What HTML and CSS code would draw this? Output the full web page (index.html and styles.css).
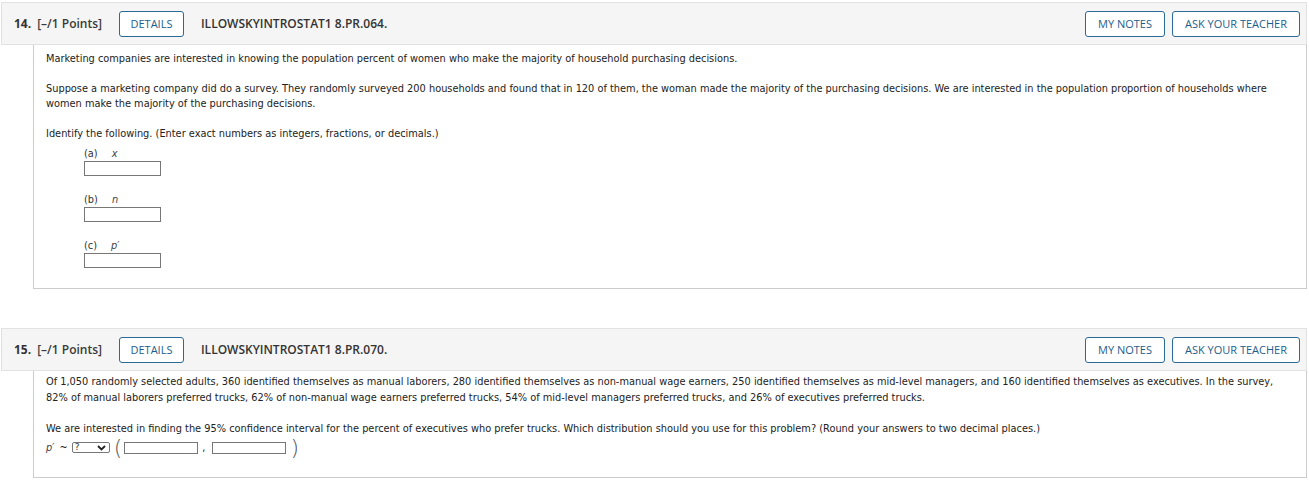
FILE: index.html
```html
<!DOCTYPE html>
<html>
<head>
<meta charset="utf-8">
<link rel="stylesheet" href="styles.css">
</head>
<body>
<div class="question">
  <div class="qhead">
    <span class="qnum">14.</span>
    <span class="points">[–/1 Points]</span>
    <button class="btn details">DETAILS</button>
    <span class="qid">ILLOWSKYINTROSTAT1 8.PR.064.</span>
    <div class="spacer"></div>
    <button class="btn">MY NOTES</button>
    <button class="btn ask">ASK YOUR TEACHER</button>
  </div>
  <div class="qbody first">
    <p>Marketing companies are interested in knowing the population percent of women who make the majority of household purchasing decisions.</p>
    <p>Suppose a marketing company did do a survey. They randomly surveyed 200 households and found that in 120 of them, the woman made the majority of the purchasing decisions. We are interested in the population proportion of households where women make the majority of the purchasing decisions.</p>
    <p class="lead">Identify the following. (Enter exact numbers as integers, fractions, or decimals.)</p>
    <div class="parts">
      <div class="part">
        <div class="plabel">(a)<i class="var">x</i></div>
        <div class="box"></div>
      </div>
      <div class="part">
        <div class="plabel">(b)<i class="var">n</i></div>
        <div class="box"></div>
      </div>
      <div class="part">
        <div class="plabel">(c)<i class="var">p′</i></div>
        <div class="box"></div>
      </div>
    </div>
  </div>
</div>

<div class="question second">
  <div class="qhead">
    <span class="qnum">15.</span>
    <span class="points">[–/1 Points]</span>
    <button class="btn details">DETAILS</button>
    <span class="qid">ILLOWSKYINTROSTAT1 8.PR.070.</span>
    <div class="spacer"></div>
    <button class="btn">MY NOTES</button>
    <button class="btn ask">ASK YOUR TEACHER</button>
  </div>
  <div class="qbody tight">
    <p>Of 1,050 randomly selected adults, 360 identified themselves as manual laborers, 280 identified themselves as non-manual wage earners, 250 identified themselves as mid-level managers, and 160 identified themselves as executives. In the survey, 82% of manual laborers preferred trucks, 62% of non-manual wage earners preferred trucks, 54% of mid-level managers preferred trucks, and 26% of executives preferred trucks.</p>
    <p class="nomargin">We are interested in finding the 95% confidence interval for the percent of executives who prefer trucks. Which distribution should you use for this problem? (Round your answers to two decimal places.)</p>
    <div class="dist">
      <i class="var pv">p′</i><span class="tilde">~</span>
      <span class="select">?<svg class="chev" width="9" height="6" viewBox="0 0 9 6"><path d="M1 1 L4.5 4.5 L8 1" fill="none" stroke="#222" stroke-width="1.8"/></svg></span>
      <span class="paren">(</span>
      <span class="box wide"></span>
      <span class="comma">,</span>
      <span class="box wide"></span>
      <span class="paren">)</span>
    </div>
  </div>
</div>
</body>
</html>
```
FILE: styles.css
```css
* { box-sizing: border-box; }
body {
  margin: 0;
  padding: 2px 2px 0 1px;
  background: #fff;
  font-family: "DejaVu Sans", Verdana, sans-serif;
  color: #333;
}
.question.second { margin-top: 39px; }
.qhead {
  display: flex;
  align-items: center;
  height: 43px;
  background: #f5f5f5;
  border: 1px solid #e2e2e2;
  padding: 0 6px 0 12px;
  font-family: "Open Sans", sans-serif;
  font-size: 12px;
}
.qnum { font-weight: 700; color: #333; }
.points { font-weight: 600; color: #3a3a3a; margin-left: 6px; }
.qid { font-weight: 600; color: #333; margin-left: 17px; }
.spacer { flex: 1; }
.btn {
  font-family: "Open Sans", sans-serif;
  font-size: 11px;
  color: #1d5d8c;
  background: #fff;
  border: 1px solid #2b6a96;
  border-radius: 3px;
  height: 26px;
  padding: 0 12px;
  margin-left: 17px;
  line-height: 24px;
}
.btn.details { padding: 0 10.5px; }
.btn.ask { margin-left: 7px; }
.qbody {
  margin-left: 32px;
  border: 1px solid #ccc;
  border-top: none;
  padding: 6px 12px 20px 12px;
  font-size: 9.8px;
  line-height: 15px;
  color: #222;
}
.qbody.tight { padding-top: 3px; padding-bottom: 19px; line-height: 16px; }
.qbody p { margin: 0 0 15px 0; }
.qbody p.lead { margin-bottom: 6px; }
.qbody p.nomargin { margin-bottom: 0; }
.parts { padding-left: 38px; }
.part { margin-bottom: 17px; }
.part:last-child { margin-bottom: 0; }
.plabel { line-height: 13px; color: #333; }
.var {
  font-style: italic;
  color: #444;
  margin-left: 14px;
}
.box {
  display: block;
  width: 77px;
  height: 15px;
  border: 1px solid #777;
  background: #fff;
  margin-top: 1px;
}
.dist {
  display: flex;
  align-items: center;
  height: 21px;
  line-height: 21px;
}
.dist .var.pv { margin-left: 0; }
.tilde { margin-left: 5px; margin-right: 4px; }
.select {
  display: inline-flex;
  align-items: center;
  justify-content: space-between;
  width: 38px;
  height: 11px;
  border: 1px solid #777;
  border-radius: 2px;
  padding: 0 3px 0 2px;
  font-size: 9px;
  line-height: 9px;
  color: #333;
}
.paren {
  font-family: "DejaVu Sans", sans-serif;
  font-size: 22px;
  font-weight: 200;
  color: #555;
  margin: 0 2px 0 4px;
  line-height: 21px;
}
.box.wide {
  display: inline-block;
  width: 74px;
  height: 12px;
  margin-top: 0;
}
.comma { margin: 0 7px 0 4px; }
```
